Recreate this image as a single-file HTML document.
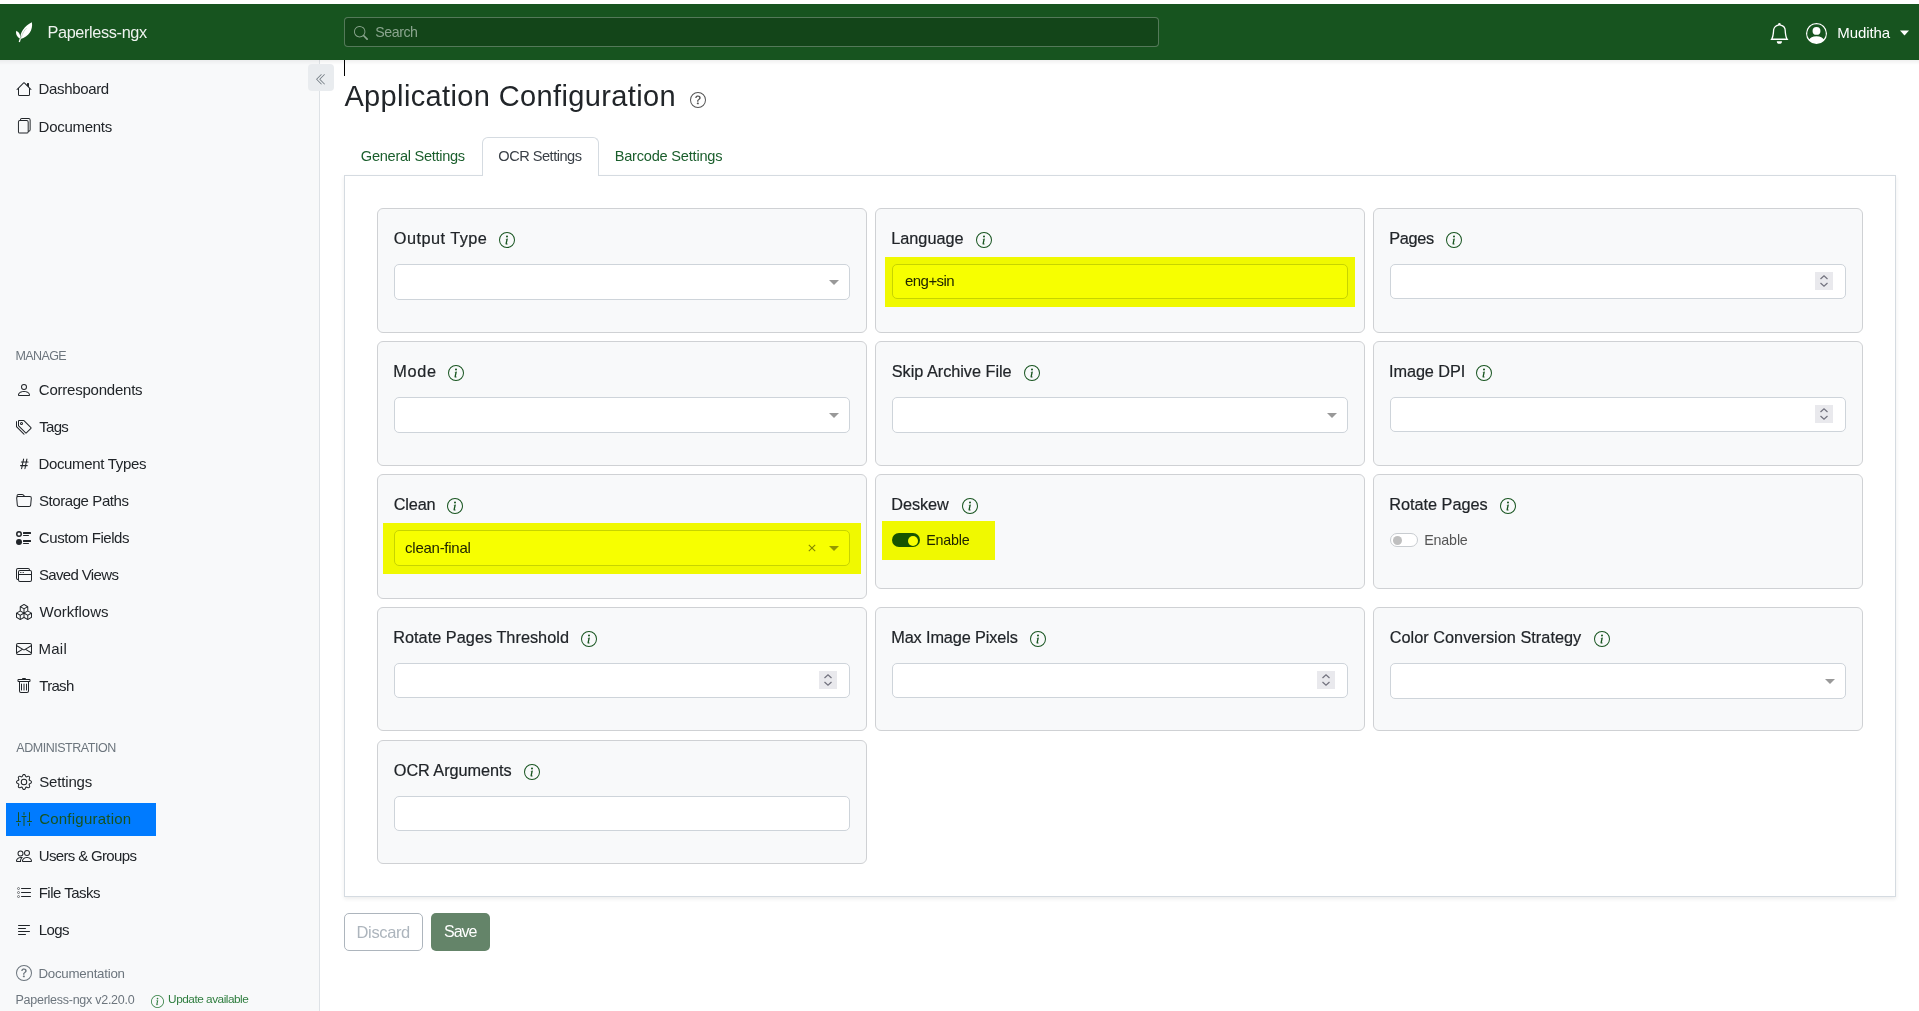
<!DOCTYPE html>
<html><head><meta charset="utf-8"><title>Paperless-ngx</title>
<style>
html,body{margin:0;padding:0;}
body{width:1919px;height:1011px;overflow:hidden;position:relative;background:#fff;font-family:"Liberation Sans",sans-serif;}
.t{position:absolute;line-height:1em;white-space:pre;font-family:"Liberation Sans",sans-serif;}
.b{position:absolute;box-sizing:border-box;}
.i{position:absolute;overflow:visible;}
</style></head><body>
<div class="b" style="left:0px;top:4px;width:1919px;height:56px;background:#17541f;"></div>
<div class="b" style="left:0px;top:60px;width:1919px;height:5px;background:linear-gradient(rgba(0,0,0,.06),rgba(0,0,0,0));"></div>
<div class="b" style="left:0px;top:60px;width:320px;height:951px;background:#f8f9fa;border-right:1px solid #dee2e6;"></div>
<div class="b" style="left:0px;top:60px;width:320px;height:5px;background:linear-gradient(rgba(0,0,0,.05),rgba(0,0,0,0));"></div>
<svg class="i" style="left:10px;top:18px" width="30" height="30" viewBox="10 18 30 30"><path d="M20.6 39 C 19.4 33, 24.5 26, 31.9 22.3 C 33.2 30, 28.5 37, 20.6 39 Z" fill="#fff"/><path d="M20.1 38.6 C 17 37.2, 15.4 34, 16.3 30.8 C 19.2 32.3, 20.8 35.2, 20.1 38.6 Z" fill="#fff"/><path d="M20.4 38.4 L 19.3 42" stroke="#fff" stroke-width="1.3" fill="none"/><path d="M21.2 37.6 C 22.5 33, 24.5 30, 26.5 28.2" stroke="#9fb8a3" stroke-width="0.6" fill="none"/></svg>
<div class="t" style="left:47.45px;top:24.04px;font-size:16.3px;letter-spacing:-0.362px;color:rgba(255,255,255,.93);">Paperless-ngx</div>
<div class="b" style="left:344px;top:17px;width:815px;height:30px;background:rgba(0,0,0,.17);border:1px solid rgba(255,255,255,.28);border-radius:4px;"></div>
<svg class="i" style="left:354px;top:26px;" width="14" height="14" viewBox="0 0 16 16" fill="#8aa58e"><path d="M11.742 10.344a6.5 6.5 0 1 0-1.397 1.398h-.001q.044.06.098.115l3.85 3.85a1 1 0 0 0 1.415-1.414l-3.85-3.85a1 1 0 0 0-.115-.1zM12 6.5a5.5 5.5 0 1 1-11 0 5.5 5.5 0 0 1 11 0"/></svg>
<div class="t" style="left:375.36px;top:24.93px;font-size:14.2px;letter-spacing:-0.476px;color:#8aa58e;">Search</div>
<svg class="i" style="left:1769px;top:23px;" width="20.8" height="20.8" viewBox="0 0 16 16" fill="#fff"><path d="M8 16a2 2 0 0 0 2-2H6a2 2 0 0 0 2 2M8 1.918l-.797.161A4 4 0 0 0 4 6c0 .628-.134 2.197-.459 3.742-.16.767-.376 1.566-.663 2.258h10.244c-.287-.692-.502-1.49-.663-2.258C12.134 8.197 12 6.628 12 6a4 4 0 0 0-3.203-3.92zM14.22 12c.223.447.481.801.78 1H1c.299-.199.557-.553.78-1C2.68 10.2 3 6.88 3 6c0-2.42 1.72-4.44 4.005-4.901a1 1 0 1 1 1.990 0A5 5 0 0 1 13 6c0 .88.32 4.2 1.220 6"/></svg>
<svg class="i" style="left:1806px;top:23px;" width="21" height="21" viewBox="0 0 16 16" fill="#fff"><path d="M11 6a3 3 0 1 1-6 0 3 3 0 0 1 6 0"/><path fill-rule="evenodd" d="M0 8a8 8 0 1 1 16 0A8 8 0 0 1 0 8m8-7a7 7 0 0 0-5.468 11.37C3.242 11.226 4.805 10 8 10s4.757 1.225 5.468 2.37A7 7 0 0 0 8 1"/></svg>
<div class="t" style="left:1837.30px;top:25.25px;font-size:15px;letter-spacing:-0.104px;color:#fff;">Muditha</div>
<svg class="i" style="left:1900px;top:30px" width="9" height="6" viewBox="0 0 9 6"><path d="M0 0.5 L9 0.5 L4.5 5.5 Z" fill="#fff"/></svg>
<div class="t" style="left:38.60px;top:81.25px;font-size:15px;letter-spacing:-0.347px;color:#212529;">Dashboard</div>
<svg class="i" style="left:16px;top:81px;" width="16" height="16" viewBox="0 0 16 16" fill="#212529"><path d="M8.707 1.5a1 1 0 0 0-1.414 0L.646 8.146a.5.5 0 0 0 .708.708L2 8.207V13.5A1.5 1.5 0 0 0 3.5 15h9a1.5 1.5 0 0 0 1.5-1.5V8.207l.646.647a.5.5 0 0 0 .708-.708L13 5.793V2.5a.5.5 0 0 0-.5-.5h-1a.5.5 0 0 0-.5.5v1.293zM13 7.207V13.5a.5.5 0 0 1-.5.5h-9a.5.5 0 0 1-.5-.5V7.207l5-5z"/></svg>
<div class="t" style="left:38.60px;top:118.50px;font-size:15px;letter-spacing:-0.284px;color:#212529;">Documents</div>
<svg class="i" style="left:16px;top:118px;" width="15.6" height="15.6" viewBox="0 0 16 16" fill="#212529"><path d="M13 0H6a2 2 0 0 0-2 2 2 2 0 0 0-2 2v10a2 2 0 0 0 2 2h7a2 2 0 0 0 2-2 2 2 0 0 0 2-2V2a2 2 0 0 0-2-2m0 13V4a2 2 0 0 0-2-2H5a1 1 0 0 1 1-1h7a1 1 0 0 1 1 1v10a1 1 0 0 1-1 1M3 4a1 1 0 0 1 1-1h7a1 1 0 0 1 1 1v10a1 1 0 0 1-1 1H4a1 1 0 0 1-1-1z"/></svg>
<div class="t" style="left:15.60px;top:350.38px;font-size:12.5px;letter-spacing:-0.645px;color:#6c757d;">MANAGE</div>
<div class="t" style="left:38.85px;top:382.15px;font-size:15px;letter-spacing:-0.227px;color:#212529;">Correspondents</div>
<svg class="i" style="left:16px;top:382.4px;" width="16" height="16" viewBox="0 0 16 16" fill="#212529"><path d="M8 8a3 3 0 1 0 0-6 3 3 0 0 0 0 6m2-3a2 2 0 1 1-4 0 2 2 0 0 1 4 0m4 8c0 1-1 1-1 1H3s-1 0-1-1 1-4 6-4 6 3 6 4m-1-.004c-.001-.246-.154-.986-.832-1.664C11.516 10.68 10.289 10 8 10s-3.516.68-4.168 1.332c-.678.678-.83 1.418-.832 1.664z"/></svg>
<div class="t" style="left:39.30px;top:419.10px;font-size:15px;letter-spacing:-0.742px;color:#212529;">Tags</div>
<svg class="i" style="left:16px;top:419.34999999999997px;" width="16" height="16" viewBox="0 0 16 16" fill="#212529"><path d="M3 2v4.586l7 7L14.586 9l-7-7zM2 2a1 1 0 0 1 1-1h4.586a1 1 0 0 1 .707.293l7 7a1 1 0 0 1 0 1.414l-4.586 4.586a1 1 0 0 1-1.414 0l-7-7A1 1 0 0 1 2 6.586z"/><path d="M5.5 5a.5.5 0 1 1 0-1 .5.5 0 0 1 0 1m0 1a1.5 1.5 0 1 0 0-3 1.5 1.5 0 0 0 0 3M1 7.086a1 1 0 0 0 .293.707L8.75 15.25l-.043.043a1 1 0 0 1-1.414 0l-7-7A1 1 0 0 1 0 7.586V3a1 1 0 0 1 1-1z"/></svg>
<div class="t" style="left:38.40px;top:456.05px;font-size:15px;letter-spacing:-0.327px;color:#212529;">Document Types</div>
<svg class="i" style="left:16px;top:456.29999999999995px;" width="16" height="16" viewBox="0 0 16 16" fill="#212529"><path d="M8.39 12.648a1 1 0 0 0-.015.18c0 .305.21.508.5.508.266 0 .492-.172.555-.477l.554-2.703h1.204c.421 0 .617-.234.617-.547 0-.312-.188-.53-.617-.53h-.985l.516-2.524h1.265c.43 0 .618-.227.618-.547 0-.313-.188-.524-.618-.524h-1.046l.476-2.304a1 1 0 0 0 .016-.164.51.51 0 0 0-.516-.516.54.54 0 0 0-.539.43l-.523 2.554H7.617l.477-2.304c.008-.04.015-.118.015-.164a.51.51 0 0 0-.523-.516.54.54 0 0 0-.531.43L6.53 5.484H5.414c-.43 0-.617.22-.617.532s.187.539.617.539h.906l-.515 2.523H4.609c-.421 0-.609.219-.609.531s.188.547.61.547h.976l-.516 2.492c-.008.04-.015.125-.015.18 0 .305.21.508.5.508.265 0 .492-.172.554-.477l.555-2.703h2.242zm-1-6.109h2.266l-.515 2.563H6.859l.532-2.563z"/></svg>
<div class="t" style="left:38.93px;top:493.00px;font-size:15px;letter-spacing:-0.417px;color:#212529;">Storage Paths</div>
<svg class="i" style="left:16px;top:493.25px;" width="16" height="16" viewBox="0 0 16 16" fill="#212529"><path d="M.54 3.87.5 3a2 2 0 0 1 2-2h3.672a2 2 0 0 1 1.414.586l.828.828A2 2 0 0 0 9.828 3h3.982a2 2 0 0 1 1.992 2.181l-.637 7A2 2 0 0 1 13.174 14H2.826a2 2 0 0 1-1.991-1.819l-.637-7a2 2 0 0 1 .342-1.31zM2.19 4a1 1 0 0 0-.996 1.09l.637 7a1 1 0 0 0 .995.91h10.348a1 1 0 0 0 .995-.91l.637-7A1 1 0 0 0 13.81 4zm4.69-1.707A1 1 0 0 0 6.172 2H2.5a1 1 0 0 0-1 .981l.006.139q.323-.119.684-.12h5.396z"/></svg>
<div class="t" style="left:38.85px;top:529.95px;font-size:15px;letter-spacing:-0.431px;color:#212529;">Custom Fields</div>
<svg class="i" style="left:16px;top:530.2px;" width="16" height="16" viewBox="0 0 16 16" fill="#212529"><path d="M7 2.5a.5.5 0 0 1 .5-.5h7a.5.5 0 0 1 .5.5v1a.5.5 0 0 1-.5.5h-7a.5.5 0 0 1-.5-.5zM0 12a3 3 0 1 1 6 0 3 3 0 0 1-6 0m7-1.5a.5.5 0 0 1 .5-.5h7a.5.5 0 0 1 .5.5v1a.5.5 0 0 1-.5.5h-7a.5.5 0 0 1-.5-.5zm0-5a.5.5 0 0 1 .5-.5h5a.5.5 0 0 1 0 1h-5a.5.5 0 0 1-.5-.5m0 8a.5.5 0 0 1 .5-.5h5a.5.5 0 0 1 0 1h-5a.5.5 0 0 1-.5-.5M3 1a3 3 0 1 0 0 6 3 3 0 0 0 0-6m0 4.5a1.5 1.5 0 1 1 0-3 1.5 1.5 0 0 1 0 3"/></svg>
<div class="t" style="left:38.93px;top:566.90px;font-size:15px;letter-spacing:-0.647px;color:#212529;">Saved Views</div>
<svg class="i" style="left:16px;top:567.15px;" width="16" height="16" viewBox="0 0 16 16" fill="#212529"><path d="M4.5 6a.5.5 0 1 0 0-1 .5.5 0 0 0 0 1M6 6a.5.5 0 1 0 0-1 .5.5 0 0 0 0 1m2-.5a.5.5 0 1 1-1 0 .5.5 0 0 1 1 0"/><path d="M12 1a2 2 0 0 1 2 2 2 2 0 0 1 2 2v8a2 2 0 0 1-2 2H4a2 2 0 0 1-2-2 2 2 0 0 1-2-2V3a2 2 0 0 1 2-2zM2 12V5a2 2 0 0 1 2-2h9a1 1 0 0 0-1-1H2a1 1 0 0 0-1 1v8a1 1 0 0 0 1 1m1-4v5a1 1 0 0 0 1 1h10a1 1 0 0 0 1-1V8zm12-1V5a1 1 0 0 0-1-1H4a1 1 0 0 0-1 1v2z"/></svg>
<div class="t" style="left:39.52px;top:603.85px;font-size:15px;letter-spacing:0.009px;color:#212529;">Workflows</div>
<svg class="i" style="left:16px;top:604.1px;" width="16" height="16" viewBox="0 0 16 16" fill="#212529"><path d="M7.752.066a.5.5 0 0 1 .496 0l3.75 2.143a.5.5 0 0 1 .252.434v3.995l3.498 2A.5.5 0 0 1 16 9.07v4.286a.5.5 0 0 1-.252.434l-3.75 2.143a.5.5 0 0 1-.496 0l-3.502-2-3.502 2.001a.5.5 0 0 1-.496 0l-3.75-2.143A.5.5 0 0 1 0 13.357V9.071a.5.5 0 0 1 .252-.434L3.75 6.638V2.643a.5.5 0 0 1 .252-.434zM4.25 7.504 1.508 9.071l2.742 1.567 2.742-1.567zM7.5 9.933l-2.75 1.571v3.134l2.75-1.571zm1 3.134 2.75 1.571v-3.134L8.5 9.933zm.508-3.996 2.742 1.567 2.742-1.567-2.742-1.567zm2.242-2.433V3.504L8.5 5.076V8.21zM7.5 8.21V5.076L4.75 3.504v3.134zM5.258 2.643 8 4.21l2.742-1.567L8 1.076zM15 9.933l-2.75 1.571v3.134L15 13.067zM3.75 14.638v-3.134L1 9.933v3.134z"/></svg>
<div class="t" style="left:38.40px;top:640.80px;font-size:15px;letter-spacing:0.308px;color:#212529;">Mail</div>
<svg class="i" style="left:16px;top:641.05px;" width="16" height="16" viewBox="0 0 16 16" fill="#212529"><path d="M0 4a2 2 0 0 1 2-2h12a2 2 0 0 1 2 2v8a2 2 0 0 1-2 2H2a2 2 0 0 1-2-2zm2-1a1 1 0 0 0-1 1v.217l7 4.2 7-4.2V4a1 1 0 0 0-1-1zm13 2.383-4.708 2.825L15 11.105zm-.034 6.876-5.64-3.471L8 9.583l-1.326-.795-5.64 3.47A1 1 0 0 0 2 13h12a1 1 0 0 0 .966-.741M1 11.105l4.708-2.897L1 5.383z"/></svg>
<div class="t" style="left:39.30px;top:677.75px;font-size:15px;letter-spacing:-0.706px;color:#212529;">Trash</div>
<svg class="i" style="left:16px;top:678.0px;" width="16" height="16" viewBox="0 0 16 16" fill="#212529"><path d="M5.5 5.5A.5.5 0 0 1 6 6v6a.5.5 0 0 1-1 0V6a.5.5 0 0 1 .5-.5m2.5 0a.5.5 0 0 1 .5.5v6a.5.5 0 0 1-1 0V6a.5.5 0 0 1 .5-.5m3 .5a.5.5 0 0 0-1 0v6a.5.5 0 0 0 1 0z"/><path d="M14.5 3a1 1 0 0 1-1 1H13v9a2 2 0 0 1-2 2H5a2 2 0 0 1-2-2V4h-.5a1 1 0 0 1-1-1V2a1 1 0 0 1 1-1H6a1 1 0 0 1 1-1h2a1 1 0 0 1 1 1h3.5a1 1 0 0 1 1 1zM4.118 4 4 4.059V13a1 1 0 0 0 1 1h6a1 1 0 0 0 1-1V4.059L11.882 4zM2.5 3h11V2h-11z"/></svg>
<div class="t" style="left:16.30px;top:742.38px;font-size:12.5px;letter-spacing:-0.469px;color:#6c757d;">ADMINISTRATION</div>
<div class="b" style="left:6px;top:803px;width:150px;height:33px;background:#007bff;"></div>
<div class="t" style="left:39.23px;top:774.25px;font-size:15px;letter-spacing:-0.161px;color:#212529;">Settings</div>
<svg class="i" style="left:16px;top:774.2px;" width="16" height="16" viewBox="0 0 16 16" fill="#212529"><path d="M8 4.754a3.246 3.246 0 1 0 0 6.492 3.246 3.246 0 0 0 0-6.492M5.754 8a2.246 2.246 0 1 1 4.492 0 2.246 2.246 0 0 1-4.492 0"/><path d="M9.796 1.343c-.527-1.79-3.065-1.79-3.592 0l-.094.319a.873.873 0 0 1-1.255.52l-.292-.16c-1.64-.892-3.433.902-2.54 2.541l.159.292a.873.873 0 0 1-.52 1.255l-.319.094c-1.79.527-1.790 3.065 0 3.592l.319.094a.873.873 0 0 1 .52 1.255l-.16.292c-.892 1.64.901 3.434 2.541 2.54l.292-.159a.873.873 0 0 1 1.255.52l.094.319c.527 1.79 3.065 1.79 3.592 0l.094-.319a.873.873 0 0 1 1.255-.52l.292.16c1.64.893 3.434-.902 2.54-2.541l-.159-.292a.873.873 0 0 1 .52-1.255l.319-.094c1.79-.527 1.79-3.065 0-3.592l-.319-.094a.873.873 0 0 1-.52-1.255l.16-.292c.893-1.64-.902-3.433-2.541-2.54l-.292.159a.873.873 0 0 1-1.255-.52zm-2.633.283c.246-.835 1.428-.835 1.674 0l.094.319a1.873 1.873 0 0 0 2.693 1.115l.291-.16c.764-.415 1.6.42 1.184 1.185l-.159.292a1.873 1.873 0 0 0 1.116 2.692l.318.094c.835.246.835 1.428 0 1.674l-.319.094a1.873 1.873 0 0 0-1.115 2.693l.16.291c.415.764-.42 1.6-1.185 1.184l-.291-.159a1.873 1.873 0 0 0-2.693 1.116l-.094.318c-.246.835-1.428.835-1.674 0l-.094-.319a1.873 1.873 0 0 0-2.692-1.115l-.292.16c-.764.415-1.6-.42-1.184-1.185l.159-.291A1.873 1.873 0 0 0 1.945 8.93l-.319-.094c-.835-.246-.835-1.428 0-1.674l.319-.094A1.873 1.873 0 0 0 3.06 4.377l-.16-.292c-.415-.764.42-1.6 1.185-1.184l.292.159a1.873 1.873 0 0 0 2.692-1.115z"/></svg>
<div class="t" style="left:39.15px;top:811.23px;font-size:15px;letter-spacing:0.237px;color:#17541f;">Configuration</div>
<svg class="i" style="left:16px;top:811.1800000000001px;" width="16" height="16" viewBox="0 0 16 16" fill="#17541f"><path d="M0 10.5a.5.5 0 0 0 .5.5h4a.5.5 0 0 0 0-1H3V1.5a.5.5 0 0 0-1 0V10H.5a.5.5 0 0 0-.5.5M2.5 12a.5.5 0 0 0-.5.5v2a.5.5 0 0 0 1 0v-2a.5.5 0 0 0-.5-.5m3-6.5A.5.5 0 0 0 6 6h1.5v8.5a.5.5 0 0 0 1 0V6H10a.5.5 0 0 0 0-1H6a.5.5 0 0 0-.5.5M8 1a.5.5 0 0 0-.5.5v2a.5.5 0 0 0 1 0v-2A.5.5 0 0 0 8 1m3 9.5a.5.5 0 0 0 .5.5h4a.5.5 0 0 0 0-1H14V1.5a.5.5 0 0 0-1 0V10h-1.5a.5.5 0 0 0-.5.5m2.5 1.5a.5.5 0 0 0-.5.5v2a.5.5 0 0 0 1 0v-2a.5.5 0 0 0-.5-.5"/></svg>
<div class="t" style="left:38.77px;top:848.21px;font-size:15px;letter-spacing:-0.660px;color:#212529;">Users &amp; Groups</div>
<svg class="i" style="left:16px;top:848.1600000000001px;" width="16" height="16" viewBox="0 0 16 16" fill="#212529"><path d="M15 14s1 0 1-1-1-4-5-4-5 3-5 4 1 1 1 1zm-7.978-1L7 12.996c.001-.264.167-1.03.76-1.72C8.312 10.629 9.282 10 11 10c1.717 0 2.687.63 3.24 1.276.593.69.758 1.457.76 1.72l-.008.002-.014.002zM11 7a2 2 0 1 0 0-4 2 2 0 0 0 0 4m3-2a3 3 0 1 1-6 0 3 3 0 0 1 6 0M6.936 9.28a6 6 0 0 0-1.23-.247A7 7 0 0 0 5 9c-4 0-5 3-5 4q0 1 1 1h4.216A2.240 2.240 0 0 1 5 13c0-1.010.377-2.042 1.090-2.904.243-.294.526-.569.846-.816M4.920 10A5.500 5.500 0 0 0 4 13H1c0-.26.164-1.030.760-1.724.545-.636 1.492-1.256 3.160-1.275ZM1.500 5.500a3 3 0 1 1 6 0 3 3 0 0 1-6 0m3-2a2 2 0 1 0 0 4 2 2 0 0 0 0-4"/></svg>
<div class="t" style="left:38.70px;top:885.19px;font-size:15px;letter-spacing:-0.506px;color:#212529;">File Tasks</div>
<svg class="i" style="left:16px;top:885.1400000000001px;" width="16" height="16" viewBox="0 0 16 16" fill="#212529"><path fill-rule="evenodd" d="M2 2.5a.5.5 0 0 0-.5.5v1a.5.5 0 0 0 .5.5h1a.5.5 0 0 0 .5-.5V3a.5.5 0 0 0-.5-.5zM3 3H2v1h1z"/><path d="M5 3.5a.5.5 0 0 1 .5-.5h9a.5.5 0 0 1 0 1h-9a.5.5 0 0 1-.5-.5M5.5 7a.5.5 0 0 0 0 1h9a.5.5 0 0 0 0-1zm0 4a.5.5 0 0 0 0 1h9a.5.5 0 0 0 0-1z"/><path fill-rule="evenodd" d="M1.5 7a.5.5 0 0 1 .5-.5h1a.5.5 0 0 1 .5.5v1a.5.5 0 0 1-.5.5H2a.5.5 0 0 1-.5-.5zM2 7h1v1H2zm0 3.5a.5.5 0 0 0-.5.5v1a.5.5 0 0 0 .5.5h1a.5.5 0 0 0 .5-.5v-1a.5.5 0 0 0-.5-.5zm1 .5H2v1h1z"/></svg>
<div class="t" style="left:38.70px;top:922.17px;font-size:15px;letter-spacing:-0.575px;color:#212529;">Logs</div>
<svg class="i" style="left:16px;top:922.12px;" width="16" height="16" viewBox="0 0 16 16" fill="#212529"><path d="M2 12.5a.5.5 0 0 1 .5-.5h7a.5.5 0 0 1 0 1h-7a.5.5 0 0 1-.5-.5m0-3a.5.5 0 0 1 .5-.5h11a.5.5 0 0 1 0 1h-11a.5.5 0 0 1-.5-.5m0-3a.5.5 0 0 1 .5-.5h7a.5.5 0 0 1 0 1h-7a.5.5 0 0 1-.5-.5m0-3a.5.5 0 0 1 .5-.5h11a.5.5 0 0 1 0 1h-11a.5.5 0 0 1-.5-.5"/></svg>
<svg class="i" style="left:16px;top:965px;" width="16" height="16" viewBox="0 0 16 16" fill="#6c757d"><path d="M8 15A7 7 0 1 1 8 1a7 7 0 0 1 0 14m0 1A8 8 0 1 0 8 0a8 8 0 0 0 0 16"/><path d="M5.255 5.786a.237.237 0 0 0 .241.247h.825c.138 0 .248-.113.266-.25.09-.656.54-1.134 1.342-1.134.686 0 1.314.343 1.314 1.168 0 .635-.374.927-.965 1.371-.673.489-1.206 1.06-1.168 1.987l.003.217a.25.25 0 0 0 .25.246h.811a.25.25 0 0 0 .25-.25v-.105c0-.718.273-.927 1.01-1.486.609-.463 1.244-.977 1.244-2.056 0-1.511-1.276-2.241-2.673-2.241-1.267 0-2.655.59-2.75 2.286m1.557 5.763c0 .533.425.927 1.01.927.609 0 1.028-.394 1.028-.927 0-.552-.42-.94-1.029-.94-.584 0-1.009.388-1.009.94"/></svg>
<div class="t" style="left:38.44px;top:966.80px;font-size:13.3px;letter-spacing:-0.243px;color:#6c757d;">Documentation</div>
<div class="t" style="left:15.50px;top:993.58px;font-size:12.5px;letter-spacing:-0.262px;color:#6c757d;">Paperless-ngx v2.20.0</div>
<svg class="i" style="left:151px;top:994.5px;" width="13" height="13" viewBox="0 0 16 16" fill="#2e7d3e"><path d="M8 15A7 7 0 1 1 8 1a7 7 0 0 1 0 14m0 1A8 8 0 1 0 8 0a8 8 0 0 0 0 16"/><path d="m8.93 6.588-2.29.287-.082.38.45.083c.294.07.352.176.288.469l-.738 3.468c-.194.897.105 1.319.808 1.319.545 0 1.178-.252 1.465-.598l.088-.416c-.2.176-.492.246-.686.246-.275 0-.375-.193-.304-.533zM9 4.5a1 1 0 1 1-2 0 1 1 0 0 1 2 0"/></svg>
<div class="t" style="left:168.12px;top:994.17px;font-size:11.8px;letter-spacing:-0.480px;color:#2e7d3e;">Update available</div>
<div class="b" style="left:308px;top:64px;width:26px;height:27px;background:#e9ecef;border-radius:4px;"></div>
<svg class="i" style="left:315px;top:73px;" width="12.6" height="12.6" viewBox="0 0 16 16" fill="#6c757d"><path fill-rule="evenodd" d="M8.354 1.646a.5.5 0 0 1 0 .708L2.707 8l5.647 5.646a.5.5 0 0 1-.708.708l-6-6a.5.5 0 0 1 0-.708l6-6a.5.5 0 0 1 .708 0"/><path fill-rule="evenodd" d="M12.354 1.646a.5.5 0 0 1 0 .708L6.707 8l5.647 5.646a.5.5 0 0 1-.708.708l-6-6a.5.5 0 0 1 0-.708l6-6a.5.5 0 0 1 .708 0"/></svg>
<div class="b" style="left:344px;top:60px;width:1px;height:16px;background:#000;"></div>
<div class="t" style="left:344.40px;top:81.75px;font-size:29px;letter-spacing:0.369px;color:#212529;">Application Configuration</div>
<svg class="i" style="left:690px;top:91.5px;" width="16" height="16" viewBox="0 0 16 16" fill="#555"><path d="M8 15A7 7 0 1 1 8 1a7 7 0 0 1 0 14m0 1A8 8 0 1 0 8 0a8 8 0 0 0 0 16"/><path d="M5.255 5.786a.237.237 0 0 0 .241.247h.825c.138 0 .248-.113.266-.25.09-.656.54-1.134 1.342-1.134.686 0 1.314.343 1.314 1.168 0 .635-.374.927-.965 1.371-.673.489-1.206 1.06-1.168 1.987l.003.217a.25.25 0 0 0 .25.246h.811a.25.25 0 0 0 .25-.25v-.105c0-.718.273-.927 1.01-1.486.609-.463 1.244-.977 1.244-2.056 0-1.511-1.276-2.241-2.673-2.241-1.267 0-2.655.59-2.75 2.286m1.557 5.763c0 .533.425.927 1.01.927.609 0 1.028-.394 1.028-.927 0-.552-.42-.94-1.029-.94-.584 0-1.009.388-1.009.94"/></svg>
<div class="b" style="left:344px;top:175px;width:1552px;height:722px;border:1px solid #d5dbe1;box-shadow:0 .125rem .25rem rgba(0,0,0,.075);background:#fff;"></div>
<div class="b" style="left:482px;top:137px;width:117px;height:39px;background:#fff;border:1px solid #d5dbe1;border-bottom:none;border-radius:6px 6px 0 0;"></div>
<div class="t" style="left:360.87px;top:149.19px;font-size:14.6px;letter-spacing:-0.295px;color:#1a5e2c;">General Settings</div>
<div class="t" style="left:498.34px;top:149.19px;font-size:14.6px;letter-spacing:-0.510px;color:#3a4047;">OCR Settings</div>
<div class="t" style="left:614.63px;top:149.19px;font-size:14.6px;letter-spacing:-0.213px;color:#1a5e2c;">Barcode Settings</div>
<div class="b" style="left:377px;top:208px;width:490px;height:125px;background:#f8f9fa;border:1px solid #cfd1d4;border-radius:6px;"></div>
<div class="t" style="left:393.77px;top:229.85px;font-size:16.3px;letter-spacing:0.476px;color:#212529;-webkit-text-stroke:0.2px #212529;">Output Type</div>
<svg class="i" style="left:499px;top:231.9px;" width="16" height="16" viewBox="0 0 16 16" fill="#17541f"><path d="M8 15A7 7 0 1 1 8 1a7 7 0 0 1 0 14m0 1A8 8 0 1 0 8 0a8 8 0 0 0 0 16"/><path d="m8.93 6.588-2.29.287-.082.38.45.083c.294.07.352.176.288.469l-.738 3.468c-.194.897.105 1.319.808 1.319.545 0 1.178-.252 1.465-.598l.088-.416c-.2.176-.492.246-.686.246-.275 0-.375-.193-.304-.533zM9 4.5a1 1 0 1 1-2 0 1 1 0 0 1 2 0"/></svg>
<div class="b" style="left:394px;top:264px;width:456px;height:36px;background:#fff;border:1px solid #ced4da;border-radius:5px;"></div>
<svg class="i" style="left:829px;top:280px" width="10" height="5" viewBox="0 0 10 5"><path d="M0 0 L10 0 L5 5 Z" fill="#999"/></svg>
<div class="b" style="left:875px;top:208px;width:490px;height:125px;background:#f8f9fa;border:1px solid #cfd1d4;border-radius:6px;"></div>
<div class="t" style="left:891.20px;top:229.85px;font-size:16.3px;letter-spacing:0.000px;color:#212529;-webkit-text-stroke:0.2px #212529;">Language</div>
<svg class="i" style="left:976px;top:231.9px;" width="16" height="16" viewBox="0 0 16 16" fill="#17541f"><path d="M8 15A7 7 0 1 1 8 1a7 7 0 0 1 0 14m0 1A8 8 0 1 0 8 0a8 8 0 0 0 0 16"/><path d="m8.93 6.588-2.29.287-.082.38.45.083c.294.07.352.176.288.469l-.738 3.468c-.194.897.105 1.319.808 1.319.545 0 1.178-.252 1.465-.598l.088-.416c-.2.176-.492.246-.686.246-.275 0-.375-.193-.304-.533zM9 4.5a1 1 0 1 1-2 0 1 1 0 0 1 2 0"/></svg>
<div class="b" style="left:892px;top:264px;width:456px;height:35px;background:#fff;border:1px solid #ced4da;border-radius:5px;"></div>
<div class="b" style="left:1373px;top:208px;width:490px;height:125px;background:#f8f9fa;border:1px solid #cfd1d4;border-radius:6px;"></div>
<div class="t" style="left:1389.20px;top:229.85px;font-size:16.3px;letter-spacing:-0.334px;color:#212529;-webkit-text-stroke:0.2px #212529;">Pages</div>
<svg class="i" style="left:1446px;top:231.9px;" width="16" height="16" viewBox="0 0 16 16" fill="#17541f"><path d="M8 15A7 7 0 1 1 8 1a7 7 0 0 1 0 14m0 1A8 8 0 1 0 8 0a8 8 0 0 0 0 16"/><path d="m8.93 6.588-2.29.287-.082.38.45.083c.294.07.352.176.288.469l-.738 3.468c-.194.897.105 1.319.808 1.319.545 0 1.178-.252 1.465-.598l.088-.416c-.2.176-.492.246-.686.246-.275 0-.375-.193-.304-.533zM9 4.5a1 1 0 1 1-2 0 1 1 0 0 1 2 0"/></svg>
<div class="b" style="left:1390px;top:264px;width:456px;height:35px;background:#fff;border:1px solid #ced4da;border-radius:5px;"></div>
<div class="b" style="left:1815px;top:272px;width:18px;height:18px;background:#e9e9ed;"></div>
<svg class="i" style="left:1819px;top:274px" width="10" height="14" viewBox="0 0 10 14"><path d="M1.5 5 L5 1.8 L8.5 5 M1.5 9 L5 12.2 L8.5 9" stroke="#72727e" stroke-width="1.25" fill="none"/></svg>
<div class="b" style="left:377px;top:341px;width:490px;height:125px;background:#f8f9fa;border:1px solid #cfd1d4;border-radius:6px;"></div>
<div class="t" style="left:393.20px;top:362.84px;font-size:16.3px;letter-spacing:0.679px;color:#212529;-webkit-text-stroke:0.2px #212529;">Mode</div>
<svg class="i" style="left:448px;top:364.9px;" width="16" height="16" viewBox="0 0 16 16" fill="#17541f"><path d="M8 15A7 7 0 1 1 8 1a7 7 0 0 1 0 14m0 1A8 8 0 1 0 8 0a8 8 0 0 0 0 16"/><path d="m8.93 6.588-2.29.287-.082.38.45.083c.294.07.352.176.288.469l-.738 3.468c-.194.897.105 1.319.808 1.319.545 0 1.178-.252 1.465-.598l.088-.416c-.2.176-.492.246-.686.246-.275 0-.375-.193-.304-.533zM9 4.5a1 1 0 1 1-2 0 1 1 0 0 1 2 0"/></svg>
<div class="b" style="left:394px;top:397px;width:456px;height:36px;background:#fff;border:1px solid #ced4da;border-radius:5px;"></div>
<svg class="i" style="left:829px;top:413px" width="10" height="5" viewBox="0 0 10 5"><path d="M0 0 L10 0 L5 5 Z" fill="#999"/></svg>
<div class="b" style="left:875px;top:341px;width:490px;height:125px;background:#f8f9fa;border:1px solid #cfd1d4;border-radius:6px;"></div>
<div class="t" style="left:891.77px;top:362.84px;font-size:16.3px;letter-spacing:-0.031px;color:#212529;-webkit-text-stroke:0.2px #212529;">Skip Archive File</div>
<svg class="i" style="left:1024px;top:364.9px;" width="16" height="16" viewBox="0 0 16 16" fill="#17541f"><path d="M8 15A7 7 0 1 1 8 1a7 7 0 0 1 0 14m0 1A8 8 0 1 0 8 0a8 8 0 0 0 0 16"/><path d="m8.93 6.588-2.29.287-.082.38.45.083c.294.07.352.176.288.469l-.738 3.468c-.194.897.105 1.319.808 1.319.545 0 1.178-.252 1.465-.598l.088-.416c-.2.176-.492.246-.686.246-.275 0-.375-.193-.304-.533zM9 4.5a1 1 0 1 1-2 0 1 1 0 0 1 2 0"/></svg>
<div class="b" style="left:892px;top:397px;width:456px;height:36px;background:#fff;border:1px solid #ced4da;border-radius:5px;"></div>
<svg class="i" style="left:1327px;top:413px" width="10" height="5" viewBox="0 0 10 5"><path d="M0 0 L10 0 L5 5 Z" fill="#999"/></svg>
<div class="b" style="left:1373px;top:341px;width:490px;height:125px;background:#f8f9fa;border:1px solid #cfd1d4;border-radius:6px;"></div>
<div class="t" style="left:1389.03px;top:362.84px;font-size:16.3px;letter-spacing:-0.088px;color:#212529;-webkit-text-stroke:0.2px #212529;">Image DPI</div>
<svg class="i" style="left:1476px;top:364.9px;" width="16" height="16" viewBox="0 0 16 16" fill="#17541f"><path d="M8 15A7 7 0 1 1 8 1a7 7 0 0 1 0 14m0 1A8 8 0 1 0 8 0a8 8 0 0 0 0 16"/><path d="m8.93 6.588-2.29.287-.082.38.45.083c.294.07.352.176.288.469l-.738 3.468c-.194.897.105 1.319.808 1.319.545 0 1.178-.252 1.465-.598l.088-.416c-.2.176-.492.246-.686.246-.275 0-.375-.193-.304-.533zM9 4.5a1 1 0 1 1-2 0 1 1 0 0 1 2 0"/></svg>
<div class="b" style="left:1390px;top:397px;width:456px;height:35px;background:#fff;border:1px solid #ced4da;border-radius:5px;"></div>
<div class="b" style="left:1815px;top:405px;width:18px;height:18px;background:#e9e9ed;"></div>
<svg class="i" style="left:1819px;top:407px" width="10" height="14" viewBox="0 0 10 14"><path d="M1.5 5 L5 1.8 L8.5 5 M1.5 9 L5 12.2 L8.5 9" stroke="#72727e" stroke-width="1.25" fill="none"/></svg>
<div class="b" style="left:377px;top:474px;width:490px;height:125px;background:#f8f9fa;border:1px solid #cfd1d4;border-radius:6px;"></div>
<div class="t" style="left:393.69px;top:495.84px;font-size:16.3px;letter-spacing:-0.142px;color:#212529;-webkit-text-stroke:0.2px #212529;">Clean</div>
<svg class="i" style="left:447px;top:497.9px;" width="16" height="16" viewBox="0 0 16 16" fill="#17541f"><path d="M8 15A7 7 0 1 1 8 1a7 7 0 0 1 0 14m0 1A8 8 0 1 0 8 0a8 8 0 0 0 0 16"/><path d="m8.93 6.588-2.29.287-.082.38.45.083c.294.07.352.176.288.469l-.738 3.468c-.194.897.105 1.319.808 1.319.545 0 1.178-.252 1.465-.598l.088-.416c-.2.176-.492.246-.686.246-.275 0-.375-.193-.304-.533zM9 4.5a1 1 0 1 1-2 0 1 1 0 0 1 2 0"/></svg>
<div class="b" style="left:394px;top:530px;width:456px;height:36px;background:#fff;border:1px solid #ced4da;border-radius:5px;"></div>
<svg class="i" style="left:829px;top:546px" width="10" height="5" viewBox="0 0 10 5"><path d="M0 0 L10 0 L5 5 Z" fill="#999"/></svg>
<div class="b" style="left:875px;top:474px;width:490px;height:115px;background:#f8f9fa;border:1px solid #cfd1d4;border-radius:6px;"></div>
<div class="t" style="left:891.20px;top:495.84px;font-size:16.3px;letter-spacing:-0.045px;color:#212529;-webkit-text-stroke:0.2px #212529;">Deskew</div>
<svg class="i" style="left:962px;top:497.9px;" width="16" height="16" viewBox="0 0 16 16" fill="#17541f"><path d="M8 15A7 7 0 1 1 8 1a7 7 0 0 1 0 14m0 1A8 8 0 1 0 8 0a8 8 0 0 0 0 16"/><path d="m8.93 6.588-2.29.287-.082.38.45.083c.294.07.352.176.288.469l-.738 3.468c-.194.897.105 1.319.808 1.319.545 0 1.178-.252 1.465-.598l.088-.416c-.2.176-.492.246-.686.246-.275 0-.375-.193-.304-.533zM9 4.5a1 1 0 1 1-2 0 1 1 0 0 1 2 0"/></svg>
<div class="b" style="left:892px;top:533px;width:28px;height:14px;background:#17541f;border-radius:7px;"></div>
<div class="b" style="left:908px;top:535.5px;width:10px;height:10px;border-radius:5px;background:#fff;"></div>
<div class="t" style="left:926.26px;top:532.64px;font-size:14.3px;letter-spacing:-0.231px;color:#212529;">Enable</div>
<div class="b" style="left:1373px;top:474px;width:490px;height:115px;background:#f8f9fa;border:1px solid #cfd1d4;border-radius:6px;"></div>
<div class="t" style="left:1389.20px;top:495.84px;font-size:16.3px;letter-spacing:-0.018px;color:#212529;-webkit-text-stroke:0.2px #212529;">Rotate Pages</div>
<svg class="i" style="left:1500px;top:497.9px;" width="16" height="16" viewBox="0 0 16 16" fill="#17541f"><path d="M8 15A7 7 0 1 1 8 1a7 7 0 0 1 0 14m0 1A8 8 0 1 0 8 0a8 8 0 0 0 0 16"/><path d="m8.93 6.588-2.29.287-.082.38.45.083c.294.07.352.176.288.469l-.738 3.468c-.194.897.105 1.319.808 1.319.545 0 1.178-.252 1.465-.598l.088-.416c-.2.176-.492.246-.686.246-.275 0-.375-.193-.304-.533zM9 4.5a1 1 0 1 1-2 0 1 1 0 0 1 2 0"/></svg>
<div class="b" style="left:1390px;top:533px;width:28px;height:14px;background:#fff;border:1px solid #c8ccd0;border-radius:7px;"></div>
<div class="b" style="left:1393px;top:535.5px;width:9px;height:9px;border-radius:5px;background:#bfbfbf;"></div>
<div class="t" style="left:1424.26px;top:532.64px;font-size:14.3px;letter-spacing:-0.191px;color:#555;">Enable</div>
<div class="b" style="left:377px;top:607px;width:490px;height:124px;background:#f8f9fa;border:1px solid #cfd1d4;border-radius:6px;"></div>
<div class="t" style="left:393.20px;top:628.84px;font-size:16.3px;letter-spacing:0.024px;color:#212529;-webkit-text-stroke:0.2px #212529;">Rotate Pages Threshold</div>
<svg class="i" style="left:581px;top:630.9px;" width="16" height="16" viewBox="0 0 16 16" fill="#17541f"><path d="M8 15A7 7 0 1 1 8 1a7 7 0 0 1 0 14m0 1A8 8 0 1 0 8 0a8 8 0 0 0 0 16"/><path d="m8.93 6.588-2.29.287-.082.38.45.083c.294.07.352.176.288.469l-.738 3.468c-.194.897.105 1.319.808 1.319.545 0 1.178-.252 1.465-.598l.088-.416c-.2.176-.492.246-.686.246-.275 0-.375-.193-.304-.533zM9 4.5a1 1 0 1 1-2 0 1 1 0 0 1 2 0"/></svg>
<div class="b" style="left:394px;top:663px;width:456px;height:35px;background:#fff;border:1px solid #ced4da;border-radius:5px;"></div>
<div class="b" style="left:819px;top:671px;width:18px;height:18px;background:#e9e9ed;"></div>
<svg class="i" style="left:823px;top:673px" width="10" height="14" viewBox="0 0 10 14"><path d="M1.5 5 L5 1.8 L8.5 5 M1.5 9 L5 12.2 L8.5 9" stroke="#72727e" stroke-width="1.25" fill="none"/></svg>
<div class="b" style="left:875px;top:607px;width:490px;height:124px;background:#f8f9fa;border:1px solid #cfd1d4;border-radius:6px;"></div>
<div class="t" style="left:891.20px;top:628.84px;font-size:16.3px;letter-spacing:-0.116px;color:#212529;-webkit-text-stroke:0.2px #212529;">Max Image Pixels</div>
<svg class="i" style="left:1030px;top:630.9px;" width="16" height="16" viewBox="0 0 16 16" fill="#17541f"><path d="M8 15A7 7 0 1 1 8 1a7 7 0 0 1 0 14m0 1A8 8 0 1 0 8 0a8 8 0 0 0 0 16"/><path d="m8.93 6.588-2.29.287-.082.38.45.083c.294.07.352.176.288.469l-.738 3.468c-.194.897.105 1.319.808 1.319.545 0 1.178-.252 1.465-.598l.088-.416c-.2.176-.492.246-.686.246-.275 0-.375-.193-.304-.533zM9 4.5a1 1 0 1 1-2 0 1 1 0 0 1 2 0"/></svg>
<div class="b" style="left:892px;top:663px;width:456px;height:35px;background:#fff;border:1px solid #ced4da;border-radius:5px;"></div>
<div class="b" style="left:1317px;top:671px;width:18px;height:18px;background:#e9e9ed;"></div>
<svg class="i" style="left:1321px;top:673px" width="10" height="14" viewBox="0 0 10 14"><path d="M1.5 5 L5 1.8 L8.5 5 M1.5 9 L5 12.2 L8.5 9" stroke="#72727e" stroke-width="1.25" fill="none"/></svg>
<div class="b" style="left:1373px;top:607px;width:490px;height:124px;background:#f8f9fa;border:1px solid #cfd1d4;border-radius:6px;"></div>
<div class="t" style="left:1389.68px;top:628.84px;font-size:16.3px;letter-spacing:0.026px;color:#212529;-webkit-text-stroke:0.2px #212529;">Color Conversion Strategy</div>
<svg class="i" style="left:1594px;top:630.9px;" width="16" height="16" viewBox="0 0 16 16" fill="#17541f"><path d="M8 15A7 7 0 1 1 8 1a7 7 0 0 1 0 14m0 1A8 8 0 1 0 8 0a8 8 0 0 0 0 16"/><path d="m8.93 6.588-2.29.287-.082.38.45.083c.294.07.352.176.288.469l-.738 3.468c-.194.897.105 1.319.808 1.319.545 0 1.178-.252 1.465-.598l.088-.416c-.2.176-.492.246-.686.246-.275 0-.375-.193-.304-.533zM9 4.5a1 1 0 1 1-2 0 1 1 0 0 1 2 0"/></svg>
<div class="b" style="left:1390px;top:663px;width:456px;height:36px;background:#fff;border:1px solid #ced4da;border-radius:5px;"></div>
<svg class="i" style="left:1825px;top:679px" width="10" height="5" viewBox="0 0 10 5"><path d="M0 0 L10 0 L5 5 Z" fill="#999"/></svg>
<div class="b" style="left:377px;top:740px;width:490px;height:124px;background:#f8f9fa;border:1px solid #cfd1d4;border-radius:6px;"></div>
<div class="t" style="left:393.77px;top:761.84px;font-size:16.3px;letter-spacing:-0.051px;color:#212529;-webkit-text-stroke:0.2px #212529;">OCR Arguments</div>
<svg class="i" style="left:524px;top:763.9px;" width="16" height="16" viewBox="0 0 16 16" fill="#17541f"><path d="M8 15A7 7 0 1 1 8 1a7 7 0 0 1 0 14m0 1A8 8 0 1 0 8 0a8 8 0 0 0 0 16"/><path d="m8.93 6.588-2.29.287-.082.38.45.083c.294.07.352.176.288.469l-.738 3.468c-.194.897.105 1.319.808 1.319.545 0 1.178-.252 1.465-.598l.088-.416c-.2.176-.492.246-.686.246-.275 0-.375-.193-.304-.533zM9 4.5a1 1 0 1 1-2 0 1 1 0 0 1 2 0"/></svg>
<div class="b" style="left:394px;top:796px;width:456px;height:35px;background:#fff;border:1px solid #ced4da;border-radius:5px;"></div>
<div class="t" style="left:905.10px;top:273.05px;font-size:15px;letter-spacing:-0.579px;color:#212529;">eng+sin</div>
<div class="t" style="left:405.10px;top:539.75px;font-size:15px;letter-spacing:-0.265px;color:#212529;">clean-final</div>
<svg class="i" style="left:808px;top:544px" width="8" height="8" viewBox="0 0 8 8"><path d="M0.8 0.8 L7.2 7.2 M7.2 0.8 L0.8 7.2" stroke="#888" stroke-width="1.1"/></svg>
<div class="b" style="left:885px;top:257px;width:470px;height:50px;background:#f7ff00;mix-blend-mode:multiply;"></div>
<div class="b" style="left:383px;top:523px;width:478px;height:51px;background:#f7ff00;mix-blend-mode:multiply;"></div>
<div class="b" style="left:882px;top:521px;width:113px;height:39px;background:#f7ff00;mix-blend-mode:multiply;"></div>
<div class="b" style="left:344px;top:913px;width:79px;height:38px;border:1px solid #adb5bd;border-radius:5px;background:#fff;"></div>
<div class="t" style="left:356.58px;top:924.08px;font-size:16.5px;letter-spacing:-0.374px;color:#adb5bd;">Discard</div>
<div class="b" style="left:431px;top:913px;width:59px;height:38px;background:#648469;border-radius:5px;"></div>
<div class="t" style="left:443.98px;top:924.40px;font-size:16px;letter-spacing:-1.013px;color:#fff;">Save</div>
</body></html>
